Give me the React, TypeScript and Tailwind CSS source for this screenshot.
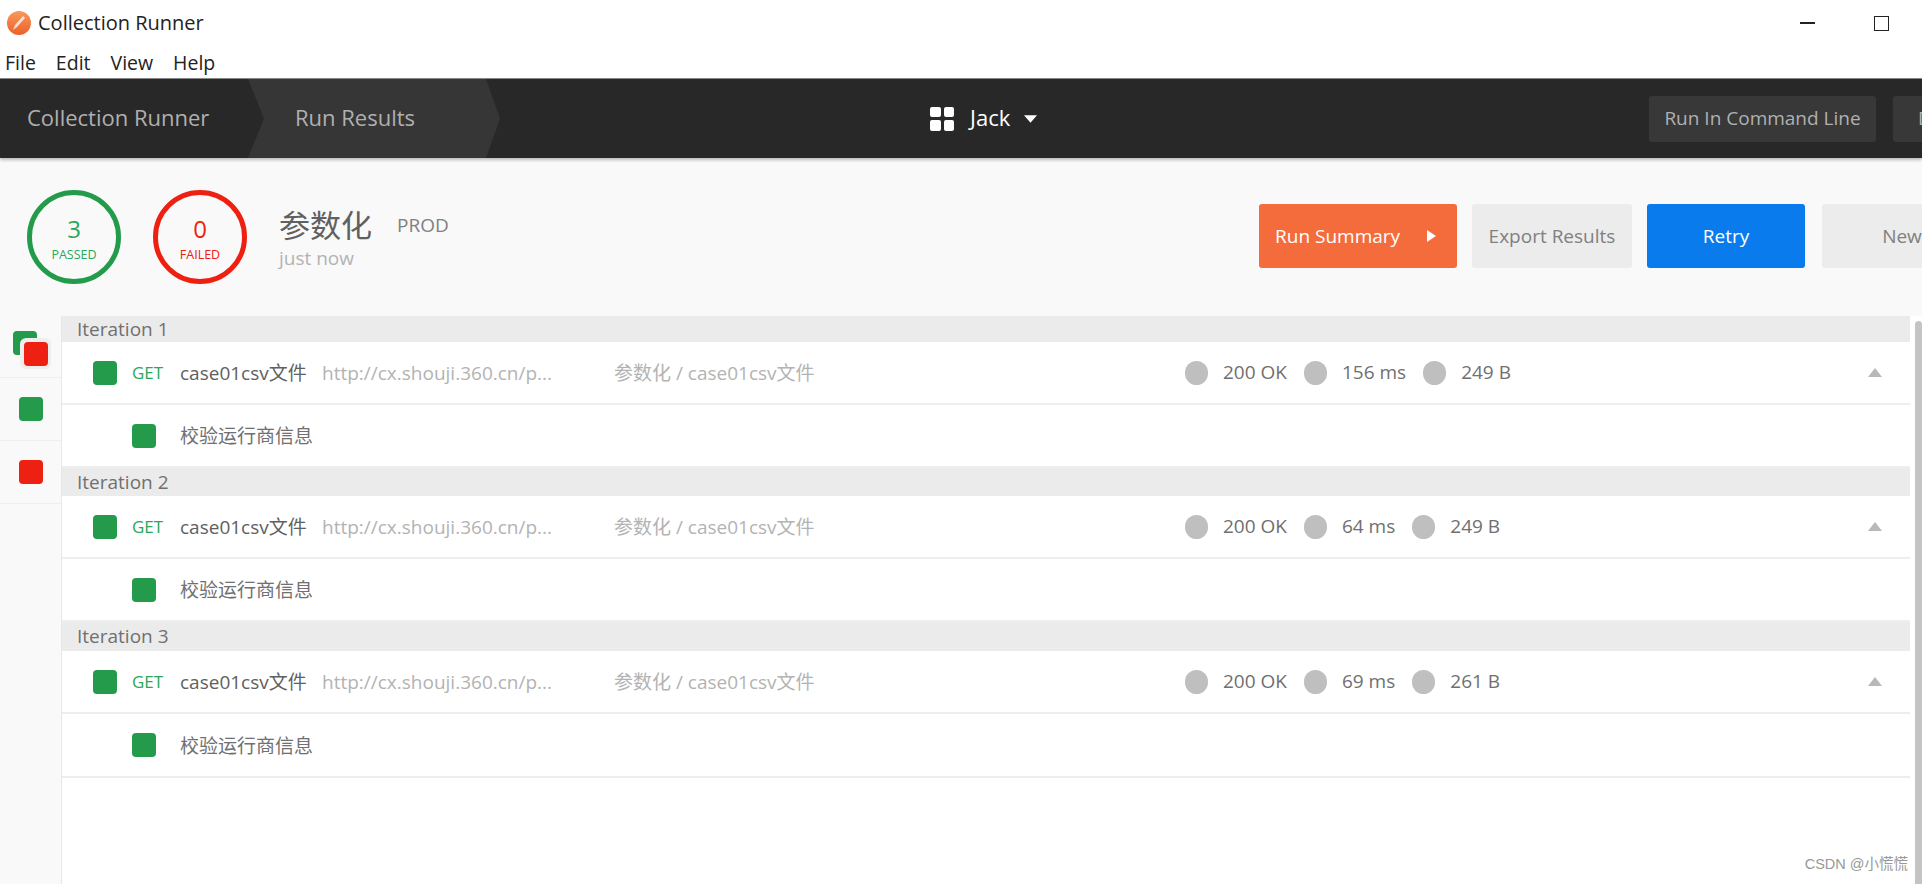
const iterations = [
  { name: 'Iteration 1', time: '156 ms', size: '249 B', head: 'h-[26px]', sub: 'h-[63px]' },
  { name: 'Iteration 2', time: '64 ms', size: '249 B', head: 'h-[28px]', sub: 'h-[63px]' },
  { name: 'Iteration 3', time: '69 ms', size: '261 B', head: 'h-[29px]', sub: 'h-[64px]' },
]

function Square({ color = 'bg-[#249b4b]' }: { color?: string }) {
  return <div className={`w-6 h-6 rounded-[4px] shrink-0 ${color}`} />
}

function Stat({ label }: { label: string }) {
  return (
    <div className="flex items-center gap-[15px]">
      <div className="w-[23px] h-6 rounded-full bg-[#bfbfbf] shrink-0" />
      <span className="text-[19px] text-[#707070] whitespace-nowrap">{label}</span>
    </div>
  )
}

function ScoreCircle({ value, label, border, text }: { value: string; label: string; border: string; text: string }) {
  return (
    <div className={`w-[94px] h-[94px] rounded-full border-[5px] flex flex-col items-center shrink-0 ${border} ${text}`}>
      <span className="text-[24px] leading-[30px] mt-[19px]">{value}</span>
      <span className="text-[12.5px] leading-[14px] mt-[4px]">{label}</span>
    </div>
  )
}

export default function App() {
  return (
    <div className="relative w-[1922px] h-[884px] overflow-hidden bg-white font-[Open_Sans,Noto_Sans_CJK_SC,sans-serif]">
      {/* Title bar */}
      <div className="h-[46px] flex items-center pl-[7px] pr-[33px]">
        <svg width="24" height="24" viewBox="0 0 24 24" className="shrink-0">
          <defs>
            <linearGradient id="logo" x1="0" y1="0" x2="0" y2="1">
              <stop offset="0" stopColor="#f79a5c" />
              <stop offset="1" stopColor="#ee5f2a" />
            </linearGradient>
          </defs>
          <circle cx="12" cy="12" r="12" fill="url(#logo)" />
          <path d="M6 19 L8 14 L16 5 L18 7 L10 16 Z" fill="#fff" opacity="0.75" />
        </svg>
        <span className="ml-[7px] text-[20px] text-[#222]">Collection Runner</span>
        <div className="ml-auto flex items-center gap-[59px]">
          <div className="w-[15px] h-[2px] bg-[#222]" />
          <div className="w-[15px] h-[15px] border-[1.5px] border-[#222]" />
        </div>
      </div>

      {/* Menu */}
      <div className="h-[32px] pt-[2px] flex items-center pl-[5px] gap-5 text-[19.5px] text-[#222]">
        <span>File</span>
        <span>Edit</span>
        <span>View</span>
        <span>Help</span>
      </div>

      {/* Header */}
      <div className="h-[80px] bg-[#282828] border-t border-[#888] flex items-center overflow-hidden shadow-[0_2px_3px_rgba(0,0,0,0.25)] relative">
        <div className="w-[248px] shrink-0 pl-[27px] pb-[2px] text-[22px] text-[#b0b0b0] whitespace-nowrap">Collection Runner</div>
        <div className="w-[252px] h-full shrink-0 bg-[#363636] pl-[47px] pb-[2px] flex items-center text-[22px] text-[#b0b0b0] [clip-path:polygon(0_0,238px_0,100%_50%,238px_100%,0_100%,16px_50%)]">
          Run Results
        </div>
        <div className="ml-[430px] w-[110px] shrink-0 flex items-center text-white">
          <div className="grid grid-cols-2 gap-[3px] w-6 h-6 shrink-0">
            <div className="bg-white rounded-[2px]" />
            <div className="bg-white rounded-[2px]" />
            <div className="bg-white rounded-[2px]" />
            <div className="bg-white rounded-[2px]" />
          </div>
          <span className="ml-4 pb-[2px] text-[22px]">Jack</span>
          <svg width="13" height="8" viewBox="0 0 14 8" className="ml-[14px] shrink-0">
            <path d="M0 0 H14 L7 8 Z" fill="#fff" />
          </svg>
        </div>
        <div className="ml-[609px] w-[227px] h-[46px] shrink-0 rounded-[3px] bg-[#383838] flex items-center justify-center text-[19px] text-[#b0b0b0] whitespace-nowrap">
          Run In Command Line
        </div>
        <div className="ml-[17px] w-[100px] h-[46px] shrink-0 rounded-[3px] bg-[#383838] pl-[25px] flex items-center text-[19px] text-[#b0b0b0]">
          Docs
        </div>
      </div>

      {/* Summary */}
      <div className="h-[158px] bg-[#f9f9f9] flex items-start overflow-hidden">
        <div className="ml-[27px] mt-[32px] flex gap-8">
          <ScoreCircle value="3" label="PASSED" border="border-[#249b4b]" text="text-[#2aa858]" />
          <ScoreCircle value="0" label="FAILED" border="border-[#ee2012]" text="text-[#ee2012]" />
        </div>
        <div className="ml-[32px] mt-[46px] w-[300px] shrink-0">
          <div className="flex items-center h-[42px]">
            <span className="text-[31px] text-[#606060] leading-[42px]">参数化</span>
            <span className="ml-[25px] text-[19px] text-[#808080]">PROD</span>
          </div>
          <div className="text-[19px] leading-6 text-[#b3b3b3]">just now</div>
        </div>
        <div className="ml-[680px] mt-[46px] flex shrink-0 text-[19px]">
          <div className="w-[198px] h-[64px] rounded-[3px] bg-[#f46c3c] text-white flex items-center pl-4 whitespace-nowrap">
            Run Summary
            <svg width="9" height="12" viewBox="0 0 9 12" className="ml-[27px] shrink-0">
              <path d="M0 0 L9 6 L0 12 Z" fill="#fff" />
            </svg>
          </div>
          <div className="ml-[15px] w-[160px] h-[64px] rounded-[3px] bg-[#ececec] text-[#808080] flex items-center justify-center whitespace-nowrap">
            Export Results
          </div>
          <div className="ml-[15px] w-[158px] h-[64px] rounded-[3px] bg-[#097bed] text-white font-medium flex items-center justify-center">
            Retry
          </div>
          <div className="ml-[17px] w-[160px] h-[64px] rounded-[3px] bg-[#ececec] text-[#808080] flex items-center justify-center">
            New
          </div>
        </div>
      </div>

      {/* Results */}
      <div className="flex h-[568px]">
        <div className="w-[62px] shrink-0 bg-[#f9f9f9] border-r border-[#e8e8e8]">
          <div className="h-[62px] border-b border-[#eee] relative">
            <div className="absolute left-[13px] top-[15px] w-6 h-6 rounded-[4px] bg-[#249b4b]" />
            <div className="absolute left-[20px] top-[22px] w-[31px] h-[31px] rounded-[6px] bg-[#eeeeee] flex items-center justify-center">
              <Square color="bg-[#ee2012]" />
            </div>
          </div>
          <div className="h-[63px] border-b border-[#eee] flex items-center justify-center">
            <Square />
          </div>
          <div className="h-[63px] border-b border-[#eee] flex items-center justify-center">
            <Square color="bg-[#ee2012]" />
          </div>
        </div>

        <div className="w-[1848px] shrink-0">
          {iterations.map(it => (
            <div key={it.name}>
              <div className={`${it.head} bg-[#ebebeb] pl-[15px] flex items-center text-[19px] text-[#707070]`}>{it.name}</div>
              <div className="h-[63px] border-b-2 border-[#eeeeee] flex items-center pl-[31px]">
                <Square />
                <span className="ml-[15px] w-[48px] text-[17px] text-[#2aa858]">GET</span>
                <span className="text-[19px] text-[#606060] w-[142px] whitespace-nowrap pt-px">case01csv文件</span>
                <span className="text-[19px] text-[#b3b3b3] w-[292px] whitespace-nowrap pt-px">http://cx.shouji.360.cn/p...</span>
                <span className="text-[19px] text-[#b3b3b3] w-[571px] whitespace-nowrap pt-px">参数化 / case01csv文件</span>
                <div className="flex items-center gap-[17px]">
                  <Stat label="200 OK" />
                  <Stat label={it.time} />
                  <Stat label={it.size} />
                </div>
                <svg width="14" height="9" viewBox="0 0 14 9" className="ml-auto mr-[28px] shrink-0">
                  <path d="M7 0 L14 9 H0 Z" fill="#b8b8b8" />
                </svg>
              </div>
              <div className={`${it.sub} border-b-2 border-[#eeeeee] flex items-center pl-[70px]`}>
                <Square />
                <span className="ml-[24px] pt-[2px] text-[19px] text-[#707070]">校验运行商信息</span>
              </div>
            </div>
          ))}
        </div>

        <div className="w-[12px] shrink-0 pl-[5px] pt-[5px]">
          <div className="w-[7px] h-full rounded-t-[4px] bg-[#c4c4c4]" />
        </div>
      </div>

      <div className="absolute right-[14px] bottom-[8px] text-[14.5px] text-[#999] font-[Liberation_Sans,Noto_Sans_CJK_SC,sans-serif]">CSDN @小慌慌</div>
    </div>
  )
}
